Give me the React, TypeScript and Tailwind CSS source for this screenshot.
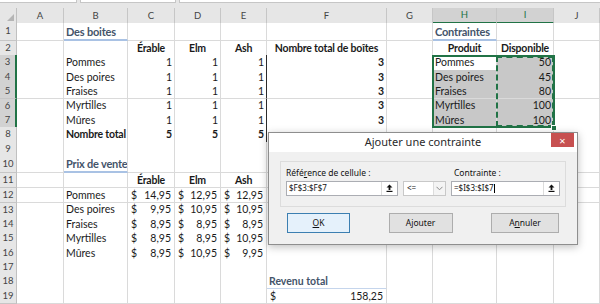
import React from 'react';

type Cell = {
  t?: string;
  a?: 'l' | 'c' | 'r';
  b?: boolean;
  acct?: string;
  head?: 'big' | 'small';
  rDark?: boolean;
  bDark?: boolean;
  sel?: boolean;
};

type Row = { n: number; h: string; cells: Record<string, Cell>; hdrSel?: boolean };

const COLS = ['A', 'B', 'C', 'D', 'E', 'F', 'G', 'H', 'I', 'J'];

const fruits = ['Pommes', 'Des poires', 'Fraises', 'Myrtilles', 'Mûres'];
const dispo = ['50', '45', '80', '100', '100'];
const prices = [
  ['14,95', '12,95', '12,95'],
  ['9,95', '10,95', '10,95'],
  ['8,95', '8,95', '8,95'],
  ['8,95', '8,95', '10,95'],
  ['8,95', '10,95', '9,95'],
];

// build the sheet rows, Excel style (rows scaled ~0.72)
const rows: Row[] = [];
rows.push({
  n: 1,
  h: 'h-[18px]',
  cells: { B: { t: 'Des boites', head: 'big' }, H: { t: 'Contraintes', head: 'big' } },
});
rows.push({
  n: 2,
  h: 'h-[14.4px]',
  cells: {
    C: { t: 'Érable', a: 'c', b: true },
    D: { t: 'Elm', a: 'c', b: true },
    E: { t: 'Ash', a: 'c', b: true },
    F: { t: 'Nombre total de boîtes', a: 'c', b: true },
    H: { t: 'Produit', a: 'c', b: true },
    I: { t: 'Disponible', a: 'c', b: true },
  },
});
fruits.forEach((f, i) => {
  const last = i === 4;
  rows.push({
    n: 3 + i,
    h: 'h-[14.4px]',
    hdrSel: true,
    cells: {
      B: { t: f },
      C: { t: '1', a: 'r', bDark: last },
      D: { t: '1', a: 'r', bDark: last },
      E: { t: '1', a: 'r', rDark: true, bDark: last },
      F: { t: '3', a: 'r', b: true, bDark: last },
      H: { t: f, sel: i > 0 },
      I: { t: dispo[i], a: 'r', sel: true },
    },
  });
});
rows.push({
  n: 8,
  h: 'h-[14.4px]',
  cells: {
    B: { t: 'Nombre total', b: true },
    C: { t: '5', a: 'r', b: true },
    D: { t: '5', a: 'r', b: true },
    E: { t: '5', a: 'r', b: true, rDark: true },
  },
});
rows.push({ n: 9, h: 'h-[14.4px]', cells: {} });
rows.push({ n: 10, h: 'h-[16.5px]', cells: { B: { t: 'Prix de vente', head: 'big' } } });
rows.push({
  n: 11,
  h: 'h-[15.5px]',
  cells: {
    C: { t: 'Érable', a: 'c', b: true },
    D: { t: 'Elm', a: 'c', b: true },
    E: { t: 'Ash', a: 'c', b: true },
  },
});
fruits.forEach((f, i) => {
  rows.push({
    n: 12 + i,
    h: 'h-[14.4px]',
    cells: {
      B: { t: f },
      C: { acct: prices[i][0] },
      D: { acct: prices[i][1] },
      E: { acct: prices[i][2] },
    },
  });
});
rows.push({ n: 17, h: 'h-[14.4px]', cells: {} });
rows.push({ n: 18, h: 'h-[14.4px]', cells: { F: { t: 'Revenu total', head: 'small' } } });
rows.push({ n: 19, h: 'h-[14.4px]', cells: { F: { acct: '158,25' } } });

const GRID = 'grid grid-cols-[17px_47px_64px_47px_46px_46px_120px_46px_64px_57px_1fr]';

function SheetCell({ c }: { c?: Cell }) {
  const cell = c || {};
  const right = cell.rDark ? 'border-r-[#2b2b2b]' : 'border-r-[#dadada]';
  let bottom = cell.bDark ? 'border-b-[#2b2b2b]' : 'border-b-[#dadada]';
  if (cell.head === 'big') bottom = 'border-b-2 border-b-[#a9c2e4]';
  if (cell.head === 'small') bottom = 'border-b-2 border-b-[#c5d5ec]';
  const bg = cell.sel ? 'bg-[#c8c8c8]' : 'bg-white';
  const just = cell.a === 'r' ? 'justify-end' : cell.a === 'c' ? 'justify-center' : 'justify-start';

  let content: React.ReactNode = null;
  if (cell.acct) {
    content = (
      <div className="flex w-full justify-between px-[1px]">
        <span>$</span>
        <span>{cell.acct}</span>
      </div>
    );
  } else if (cell.head === 'big') {
    content = <span className="text-[11px] font-bold tracking-[-0.2px] text-[#44546a]">{cell.t}</span>;
  } else if (cell.head === 'small') {
    content = <span className="text-[10.5px] font-bold text-[#44546a]">{cell.t}</span>;
  } else if (cell.t) {
    content = <span className={cell.b ? 'font-bold tracking-[-0.2px]' : ''}>{cell.t}</span>;
  }

  return (
    <div
      className={`flex items-center overflow-hidden whitespace-nowrap border-r border-b px-[2px] text-[10.5px] leading-none text-[#1a1a1a] ${right} ${bottom} ${bg} ${just}`}
    >
      {content}
    </div>
  );
}

function UpArrow() {
  return (
    <svg width="7" height="8" viewBox="0 0 7 8">
      <path d="M3.5 0.5 L6.5 3.5 H4.4 V6 H2.6 V3.5 H0.5 Z" fill="#111" />
      <rect x="0.5" y="6.8" width="6" height="1.2" fill="#111" />
    </svg>
  );
}

function Dialog() {
  return (
    <div className="absolute left-[268px] top-[132px] flex h-[113px] w-[310px] flex-col border border-[#8e8e8e] bg-[#f0f0f0] font-['Noto_Sans',sans-serif] text-[#111] shadow-[0_2px_8px_rgba(0,0,0,0.25)]">
      <div className="grid h-[19px] grid-cols-[30px_1fr_30px] bg-white">
        <div />
        <div className="pt-[3px] text-center text-[11px] leading-none text-[#2a2a2a]">Ajouter une contrainte</div>
        <div className="flex justify-end pr-[3px]">
          <div className="flex h-[14px] w-[23px] items-center justify-center bg-[#c75050] text-[11px] leading-none text-white">×</div>
        </div>
      </div>
      <div className="flex flex-1 flex-col px-[11px] pt-[9px]">
        <div className="flex h-[46px] gap-[5px] border border-[#dcdcdc] px-[5px] pt-[7px]">
          <div className="flex w-[112px] flex-col gap-[3px]">
            <span className="text-[8.5px] leading-none">
              Réfé<span className="underline">r</span>ence de cellule :
            </span>
            <div className="flex h-[15px] border border-[#abadb3] bg-white">
              <span className="flex flex-1 items-center pl-[2px] text-[8px]">$F$3:$F$7</span>
              <div className="flex w-[16px] items-center justify-center border-l border-[#dcdcdc]">
                <UpArrow />
              </div>
            </div>
          </div>
          <div className="flex w-[43px] flex-col gap-[3px]">
            <span className="text-[8.5px] leading-none">&nbsp;</span>
            <div className="flex h-[15px] border border-[#c8c8c8] bg-white">
              <span className="flex flex-1 items-center pl-[3px] text-[8px]">&lt;=</span>
              <div className="flex w-[12px] items-center justify-center border-l border-[#dcdcdc] bg-[#f4f4f4]">
                <svg width="7" height="5" viewBox="0 0 7 5">
                  <polyline points="0.5,0.8 3.5,3.8 6.5,0.8" fill="none" stroke="#8a8a8a" strokeWidth="1" />
                </svg>
              </div>
            </div>
          </div>
          <div className="flex flex-1 flex-col gap-[3px]">
            <span className="pl-[3px] text-[8.5px] leading-none">Contrainte :</span>
            <div className="flex h-[15px] border border-[#abadb3] bg-white">
              <span className="flex flex-1 items-center pl-[2px] text-[8px]">
                =$I$3:$I$7<span className="ml-[0.5px] inline-block h-[9px] w-px bg-black" />
              </span>
              <div className="flex w-[16px] items-center justify-center border-l border-[#dcdcdc]">
                <UpArrow />
              </div>
            </div>
          </div>
        </div>
        <div className="mt-[6px] flex justify-between px-[7px]">
          <div className="flex h-[20px] w-[63px] items-center justify-center border border-[#3c7fb1] bg-[#e5f1fb] text-[8.5px]">
            <span className="underline">O</span>K
          </div>
          <div className="flex h-[20px] w-[64px] items-center justify-center border border-[#adadad] bg-[#e1e1e1] text-[8.5px]">
            Ajouter
          </div>
          <div className="flex h-[20px] w-[68px] items-center justify-center border border-[#adadad] bg-[#e1e1e1] text-[8.5px]">
            A<span className="underline">n</span>nuler
          </div>
        </div>
      </div>
    </div>
  );
}

export default function App() {
  return (
    <div className="relative h-[304px] w-[600px] overflow-hidden bg-white font-['Lato',sans-serif]">
      {/* formula bar remnants */}
      <div className="flex h-[8px] gap-[3px] bg-[#e6e6e6]">
        <div className="h-[3px] w-[77px] border-b border-r border-[#c6c6c6] bg-white" />
        <div className="h-[3px] w-[96px] border-b border-x border-[#c6c6c6] bg-white" />
        <div className="h-[3px] flex-1 border-b border-l border-[#c6c6c6] bg-white" />
      </div>

      {/* column headers */}
      <div className={`${GRID} h-[15px] bg-[#e6e6e6] text-[9.5px] text-[#444]`}>
        <div className="flex items-end justify-end border-b border-r border-[#c0c0c0] p-[2px]">
          <svg width="7" height="7" viewBox="0 0 7 7">
            <polygon points="7,0 7,7 0,7" fill="#b5b5b5" />
          </svg>
        </div>
        {COLS.map((col) => {
          const sel = col === 'H' || col === 'I';
          return (
            <div
              key={col}
              className={`flex items-center justify-center border-r border-r-[#c6c6c6] ${
                sel ? 'border-b-2 border-b-[#217346] bg-[#d2d2d2] text-[#217346]' : 'border-b border-b-[#c0c0c0]'
              }`}
            >
              {col}
            </div>
          );
        })}
      </div>

      {/* rows */}
      {rows.map((r) => (
        <div key={r.n} className={`${GRID} ${r.h}`}>
          <div
            className={`flex items-center justify-center border-b border-b-[#c6c6c6] text-[9.5px] text-[#444] ${
              r.hdrSel ? 'border-r-2 border-r-[#217346] bg-[#d2d2d2]' : 'border-r border-r-[#c0c0c0] bg-[#e6e6e6]'
            }`}
          >
            {r.n}
          </div>
          {COLS.map((col) => (
            <SheetCell key={col} c={r.cells[col]} />
          ))}
        </div>
      ))}

      {/* selection H3:I7 and copy marquee I3:I7 */}
      <div className="pointer-events-none absolute left-[432px] top-[54.5px] h-[73.5px] w-[123px] border-2 border-[#217346]" />
      <div className="pointer-events-none absolute left-[496px] top-[55.5px] h-[71.5px] w-[58px] border-2 border-dashed border-[#217346]" />
      <div className="pointer-events-none absolute left-[551px] top-[124.5px] h-[6px] w-[6px] border border-white bg-[#217346]" />

      <Dialog />
    </div>
  );
}
